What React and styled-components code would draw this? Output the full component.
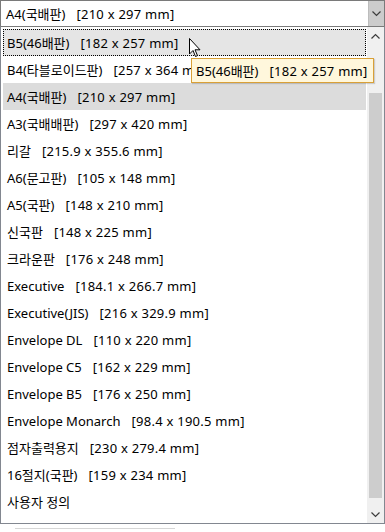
import React from "react";
import styled, { createGlobalStyle } from "styled-components";

const GlobalStyle = createGlobalStyle`
  html, body {
    margin: 0;
    padding: 0;
    background: #ffffff;
  }
  body {
    font-family: "Noto Sans", "Noto Sans CJK KR", sans-serif;
    font-size: 13px;
    color: #000000;
  }
`;

const papers = [
  ["B5(46배판)", "182 x 257 mm"],
  ["B4(타블로이드판)", "257 x 364 mm"],
  ["A4(국배판)", "210 x 297 mm"],
  ["A3(국배배판)", "297 x 420 mm"],
  ["리갈", "215.9 x 355.6 mm"],
  ["A6(문고판)", "105 x 148 mm"],
  ["A5(국판)", "148 x 210 mm"],
  ["신국판", "148 x 225 mm"],
  ["크라운판", "176 x 248 mm"],
  ["Executive", "184.1 x 266.7 mm"],
  ["Executive(JIS)", "216 x 329.9 mm"],
  ["Envelope DL", "110 x 220 mm"],
  ["Envelope C5", "162 x 229 mm"],
  ["Envelope B5", "176 x 250 mm"],
  ["Envelope Monarch", "98.4 x 190.5 mm"],
  ["점자출력용지", "230 x 279.4 mm"],
  ["16절지(국판)", "159 x 234 mm"],
  ["사용자 정의", null],
];

const Frame = styled.div`
  position: relative;
  width: 385px;
  height: 532px;
  overflow: hidden;
  display: flex;
  flex-direction: column;
  background: #ffffff;
`;

const Combo = styled.div`
  display: flex;
  align-items: stretch;
  height: 26px;
  box-sizing: border-box;
  border: 1px solid #7a7a7a;
  border-bottom: none;
`;

const ComboText = styled.div`
  flex: 1;
  display: flex;
  align-items: center;
  padding-left: 5px;
  white-space: pre;
`;

const ComboButton = styled.div`
  width: 15px;
  display: flex;
  align-items: center;
  justify-content: center;
  background: #cccccc;
  border-left: 1px solid #bcbcbc;
`;

const ListBox = styled.div`
  display: flex;
  height: 498px;
  box-sizing: border-box;
  border: 1px solid #828790;
  border-top: 1px solid #7a7a7a;
`;

const Items = styled.div`
  flex: 1;
  display: flex;
  flex-direction: column;
  padding: 2px 1px 0 2px;
`;

const Item = styled.div`
  height: 27px;
  flex-shrink: 0;
  box-sizing: border-box;
  display: flex;
  align-items: center;
  padding-left: 4px;
  white-space: pre;
  background: ${(p) => (p.$hover ? "#e5e5e5" : p.$selected ? "#dcdcdc" : "transparent")};
  outline: ${(p) => (p.$focus ? "1px dotted #000000" : "none")};
  outline-offset: -1px;
`;

const Size = styled.span`
  margin-left: 11px;
  letter-spacing: 0.25px;
`;

const ScrollBar = styled.div`
  width: 17px;
  display: flex;
  flex-direction: column;
  background: #f0f0f0;
`;

const ScrollArrow = styled.div`
  height: 17px;
  display: flex;
  align-items: center;
  justify-content: center;
`;

const Track = styled.div`
  flex: 1;
  display: flex;
  flex-direction: column;
  padding: 0 2px;
`;

const Thumb = styled.div`
  margin-top: 49px;
  flex: 1;
  margin-bottom: 8px;
  background: #cdcdcd;
`;

const Below = styled.div`
  flex: 1;
  position: relative;
  display: flex;
  align-items: center;
  padding-left: 15px;
`;

const FaintLine = styled.div`
  width: 160px;
  height: 1px;
  background: #d6d6d6;
`;

const Tooltip = styled.div`
  position: absolute;
  left: 191px;
  top: 58px;
  height: 25px;
  box-sizing: border-box;
  padding: 0 5px 0 4px;
  display: flex;
  align-items: center;
  white-space: pre;
  background: #fff7dc;
  border: 1px solid #d9a037;
  box-shadow: 1px 1px 1px rgba(0, 0, 0, 0.15);
`;

const Cursor = styled.svg`
  position: absolute;
  left: 189px;
  top: 38px;
`;

const Chevron = ({ up }) => (
  <svg width="9" height="6" viewBox="0 0 9 6">
    <path
      d={up ? "M0.5 5.5 L4.5 1.5 L8.5 5.5" : "M0.5 0.5 L4.5 4.5 L8.5 0.5"}
      fill="none"
      stroke="#3c3c3c"
      strokeWidth="1.2"
    />
  </svg>
);

const Label = ({ name, size }) => (
  <>
    {name}
    {size && <Size>[{size}]</Size>}
  </>
);

const App = () => {
  return (
    <>
      <GlobalStyle />
      <Frame>
        <Combo>
          <ComboText>
            <Label name="A4(국배판)" size="210 x 297 mm" />
          </ComboText>
          <ComboButton>
            <Chevron />
          </ComboButton>
        </Combo>
        <ListBox>
          <Items>
            {papers.map(([name, size], i) => (
              <Item key={i} $hover={i === 0} $focus={i === 0} $selected={i === 2}>
                <Label name={name} size={size} />
              </Item>
            ))}
          </Items>
          <ScrollBar>
            <ScrollArrow>
              <Chevron up />
            </ScrollArrow>
            <Track>
              <Thumb />
            </Track>
            <ScrollArrow>
              <Chevron />
            </ScrollArrow>
          </ScrollBar>
        </ListBox>
        <Below>
          <FaintLine />
        </Below>
        <Tooltip>
          <Label name="B5(46배판)" size="182 x 257 mm" />
        </Tooltip>
        <Cursor width="13" height="20" viewBox="0 0 13 20">
          <path
            d="M0.5 0.5 L0.5 16 L4 12.5 L6.5 18.5 L8.5 17.6 L6 11.8 L11 11.8 Z"
            fill="#ffffff"
            stroke="#000000"
            strokeWidth="1"
            strokeLinejoin="round"
          />
        </Cursor>
      </Frame>
    </>
  );
};

export default App;
